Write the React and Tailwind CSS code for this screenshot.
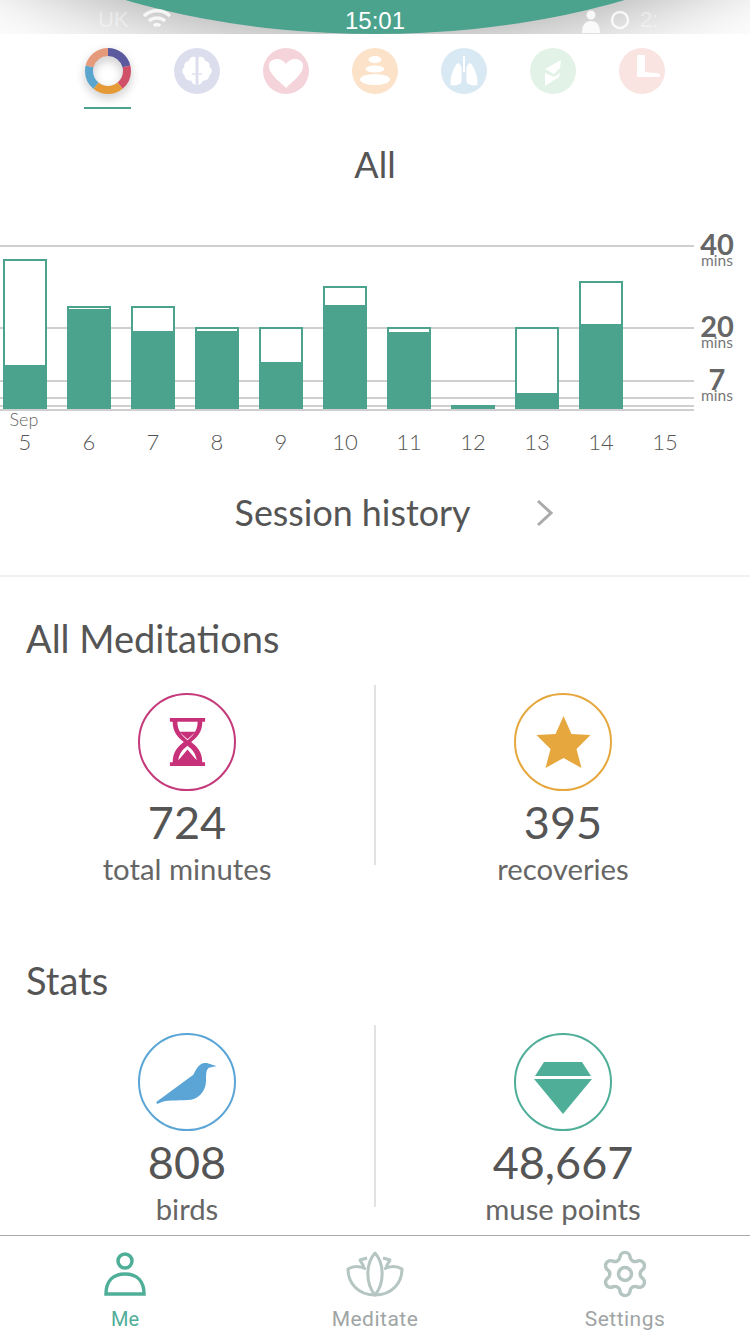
import { Settings } from 'lucide-react';

const bars = [
  { label: '5', total: 150, done: 44 },
  { label: '6', total: 103, done: 100 },
  { label: '7', total: 103, done: 78 },
  { label: '8', total: 82, done: 78 },
  { label: '9', total: 82, done: 47 },
  { label: '10', total: 123, done: 104 },
  { label: '11', total: 82, done: 77 },
  { label: '12', total: 3, done: 3 },
  { label: '13', total: 82, done: 16 },
  { label: '14', total: 128, done: 85 },
  { label: '15', total: 0, done: 0 },
];

function Bar({ total, done }) {
  return (
    <div className="w-11 flex flex-col justify-end shrink-0">
      {total > 0 && (
        <div className="relative border-2 border-[#4ba38e] bg-white w-11 box-border" style={{ height: total }}>
          <div className="absolute -left-[2px] -right-[2px] -bottom-[2px] bg-[#4ba38e]" style={{ height: done }} />
        </div>
      )}
    </div>
  );
}

function YLabel({ top, value }) {
  return (
    <div className={`absolute left-[696px] w-[42px] text-center text-[#666] ${top}`}>
      <div className="text-[29px] leading-[20px] font-bold">{value}</div>
      <div className="text-[15.5px] leading-[12px] text-[#777]">mins</div>
    </div>
  );
}

function Chart() {
  return (
    <div className="relative h-[210px] mt-[46px]">
      {/* grid lines */}
      <div className="absolute left-0 top-[13px] w-[694px] h-[2px] bg-[#cfcfcf]" />
      <div className="absolute left-0 top-[95px] w-[694px] h-[2px] bg-[#cfcfcf]" />
      <div className="absolute left-0 top-[148px] w-[694px] h-[2px] bg-[#cfcfcf]" />
      <div className="absolute left-0 top-[165px] w-[694px] h-[2px] bg-[#cfcfcf]" />
      <div className="absolute left-0 top-[173px] w-[694px] h-[2px] bg-[#cfcfcf]" />
      <div className="absolute left-0 top-[177px] w-[694px] h-[2px] bg-[#cfcfcf]" />
      <div className="absolute left-[3px] top-[26px] h-[151px] flex gap-5 items-end">
        {bars.map((b) => (
          <Bar key={b.label} total={b.total} done={b.done} />
        ))}
      </div>
      <YLabel top="top-[2px]" value="40" />
      <YLabel top="top-[84px]" value="20" />
      <YLabel top="top-[137px]" value="7" />
      <div className="absolute left-[-8px] top-[178px] w-[64px] text-center text-[18px] leading-[19px] font-light text-[#666]">Sep</div>
      <div className="absolute left-[-7px] top-[197px] flex">
        {bars.map((b) => (
          <div key={b.label} className="w-16 text-center text-[22px] leading-[26px] font-light text-[#555] shrink-0">
            {b.label}
          </div>
        ))}
      </div>
    </div>
  );
}

function Ring({ color, children }) {
  return (
    <div className="w-[98px] h-[98px] shrink-0 rounded-full border-2 flex items-center justify-center" style={{ borderColor: color }}>
      {children}
    </div>
  );
}

function Stat({ icon, value, label }) {
  return (
    <div className="flex-1 flex flex-col items-center pt-[8px]">
      {icon}
      <div className="text-[45px] leading-[52px] mt-[5px] text-[#555]">{value}</div>
      <div className="text-[29.3px] leading-[34px] mt-[4px] text-[#666]">{label}</div>
    </div>
  );
}

function TopIcon({ bg, children }) {
  return (
    <div className="w-[46px] h-[46px] rounded-full" style={{ backgroundColor: bg }}>
      <svg width="46" height="46" viewBox="0 0 46 46" fill="#fff">
        {children}
      </svg>
    </div>
  );
}

function Donut() {
  const segs = [
    ['#5b5a9f', 0, 21],
    ['#d0506a', 21, 18],
    ['#e49a37', 39, 22],
    ['#5aa5cd', 61, 18],
    ['#e59a7c', 79, 21],
  ];
  return (
    <svg width="46" height="46" viewBox="0 0 46 46" className="drop-shadow-[0_4px_5px_rgba(0,0,0,0.22)]">
      {segs.map(([c, start, len]) => (
        <circle
          key={c}
          cx="23"
          cy="23"
          r="19"
          fill="none"
          stroke={c}
          strokeWidth="8"
          pathLength="100"
          strokeDasharray={`${len} ${100 - len}`}
          strokeDashoffset={-start}
          transform="rotate(-90 23 23)"
        />
      ))}
    </svg>
  );
}

function TopIcons() {
  return (
    <div className="flex pl-[85px] gap-[43px] pt-[14px]">
      <div className="relative">
        <Donut />
        <div className="absolute left-[-1px] top-[59px] w-[47px] h-[2px] bg-[#4ba38e]" />
      </div>
      <TopIcon bg="#dcdeee">
        <path d="M21.500 9 C18 8 15 10 15 13 C12 13 9.500 16 10.500 19 C7.500 21 7.500 25 10.500 27 C11 31 14 33 17 32.500 C18.500 36 21.500 37 21.500 37 Z" />
        <path d="M24.500 9 C28 8 31 10 31 13 C34 13 36.500 16 35.500 19 C38.500 21 38.500 25 35.500 27 C35 31 32 33 29 32.500 C27.500 36 24.500 37 24.500 37 Z" />
        <path d="M21.500 26 H18 M24.500 26 H28" stroke="#dcdeee" strokeWidth="1.500" fill="none" />
      </TopIcon>
      <TopIcon bg="#f5d3da">
        <path d="M23 40 C15 32 6 26 6 18 C6 13 10 11 14 11 C18 11 21 13 23 16 C25 13 28 11 32 11 C36 11 40 13 40 18 C40 26 31 32 23 40 Z" />
      </TopIcon>
      <TopIcon bg="#fbe2c8">
        <ellipse cx="23" cy="11.500" rx="6.500" ry="3.500" />
        <ellipse cx="23" cy="21" rx="9.500" ry="3.500" />
        <ellipse cx="23" cy="31.500" rx="15" ry="5.500" />
      </TopIcon>
      <TopIcon bg="#d9e9f4">
        <path d="M22 8 h2 v16 h-2 z" />
        <path d="M20.500 20 C19 15 17 14 15 17 C11 23 9 31 9.500 37 C14 38 19 37 20.500 34 Z" />
        <path d="M25.500 20 C27 15 29 14 31 17 C35 23 37 31 36.500 37 C32 38 27 37 25.500 34 Z" />
      </TopIcon>
      <TopIcon bg="#e3f2e6">
        <path d="M31 12 L15 21 L24 26 L30 20 Z" />
        <path d="M15 25 L24 29 L30 25 L29 29 L15 38 Z" />
      </TopIcon>
      <TopIcon bg="#f9e4e1">
        <path d="M18 8 Q18 7 19 7 H25 Q26 7 26 8 V24 L40 25.500 Q41 26 41 27 V28 Q41 29 40 29 H19 Q18 29 18 28 Z" />
      </TopIcon>
    </div>
  );
}

function StatusBar() {
  return (
    <div className="relative h-[34px] overflow-hidden bg-white">
      <div className="absolute left-[-121px] top-[-466px] w-[992px] h-[500px] rounded-[50%] bg-[#4ba38e] shadow-[0_0_90px_rgba(0,0,0,0.42)]" />
      <div className="absolute left-[98px] top-[6px] text-white/40 text-[22px] leading-[28px] font-['Liberation_Sans',sans-serif]">UK</div>
      <svg width="30" height="24" viewBox="0 0 30 24" fill="none" stroke="#fff" strokeWidth="3.500" strokeOpacity="0.8" className="absolute left-[142px] top-[8px]">
        <path d="M2 8 C9 1 21 1 28 8" />
        <path d="M7 13 C11 9 19 9 23 13" />
        <path d="M12 18 C14 16 16 16 18 18" />
      </svg>
      <svg width="20" height="26" viewBox="0 0 20 26" fill="#fff" fillOpacity="0.85" className="absolute left-[581px] top-[9px]">
        <circle cx="10" cy="6" r="4.500" />
        <path d="M1 24 C1 15 5 12 10 12 C15 12 19 15 19 24 Z" />
      </svg>
      <svg width="20" height="24" viewBox="0 0 20 24" fill="none" stroke="#fff" strokeWidth="2.500" strokeOpacity="0.8" className="absolute left-[610px] top-[9px]">
        <circle cx="10" cy="11" r="8" />
      </svg>
      <div className="absolute left-[640px] top-[6px] text-white/40 text-[22px] leading-[28px] font-['Liberation_Sans',sans-serif]">2:</div>
      <div className="relative text-center text-white text-[24px] leading-[42px] font-['Liberation_Sans',sans-serif]">15:01</div>
    </div>
  );
}

export default function App() {
  return (
    <div className="relative w-[750px] h-[1334px] overflow-hidden bg-white font-['Lato',sans-serif]">
      <StatusBar />
      <TopIcons />
      <div className="text-center text-[36px] leading-[44px] mt-[48px] text-[#555]">All</div>
      <Chart />
      <div className="flex items-center justify-center h-[103px] mt-[32px] pb-[23px] pl-[39px] border-b-2 border-[#f0f0f0]">
        <span className="text-[35.8px] leading-[44px] text-[#555]">Session history</span>
        <svg width="18" height="28" viewBox="0 0 18 28" fill="none" stroke="#aaa" strokeWidth="3" className="ml-[66px]">
          <path d="M2 2 L15 14 L2 26" />
        </svg>
      </div>
      <div className="text-[38px] leading-[42px] pl-[26px] mt-[40px] text-[#555]">All Meditations</div>
      <div className="flex mt-[26px] h-[180px]">
        <Stat
          value="724"
          label="total minutes"
          icon={
            <Ring color="#c43a7b">
              <svg width="37" height="52" viewBox="0 0 40 52" fill="#c7317a">
                <path d="M1 0 H39 V4 H36 C36 16 30 21 24 26 C30 31 36 36 36 48 H39 V52 H1 V48 H4 C4 36 10 31 16 26 C10 21 4 16 4 4 H1 Z M9 4 C9 14 15 20 20 24 C25 20 31 14 31 4 Z M20 30 C15 34 11 38 10 46 L20 34 L30 46 C29 38 25 34 20 30 Z" fillRule="evenodd" />
                <path d="M11 15 H29 L20 23 Z" />
                <path d="M8 48 L20 36 L32 48 Z" />
              </svg>
            </Ring>
          }
        />
        <div className="w-[2px] bg-[#e2e2e2] h-[180px]" />
        <Stat
          value="395"
          label="recoveries"
          icon={
            <Ring color="#e6a83e">
              <svg width="55" height="52" viewBox="0 0 54 52" fill="#e6a83e">
                <path d="M27 0 L35 18 L54 19 L40 33 L45 52 L27 42 L9 52 L14 33 L0 19 L19 18 Z" />
              </svg>
            </Ring>
          }
        />
      </div>
      <div className="text-[38px] leading-[42px] pl-[26px] mt-[94px] text-[#555]">Stats</div>
      <div className="flex mt-[24px] h-[182px]">
        <Stat
          value="808"
          label="birds"
          icon={
            <Ring color="#5aa5d6">
              <svg width="61" height="43" viewBox="0 0 62 44" fill="#5aa5d6" className="-ml-[2px]">
                <path d="M0 42 L38 14 C41 8 44 2 50 2 C54 2 56 4 62 5 L54 7 C51 9 51 14 51 20 C51 32 42 40 32 40 C22 41 10 39 1 44 Z" />
              </svg>
            </Ring>
          }
        />
        <div className="w-[2px] bg-[#e2e2e2] h-[182px]" />
        <Stat
          value="48,667"
          label="muse points"
          icon={
            <Ring color="#4fae98">
              <svg width="58" height="52" viewBox="0 0 58 52" fill="#4fae98" className="mt-[11px]">
                <path d="M10 0 H48 L57 14 H1 Z" />
                <path d="M0 17 H58 L29 52 Z" />
              </svg>
            </Ring>
          }
        />
      </div>
      {/* bottom tab bar */}
      <div className="absolute left-0 bottom-0 w-full h-[99px] bg-white border-t border-[#aaa] flex">
        <div className="flex-1 flex flex-col items-center">
          <svg width="44" height="46" viewBox="0 0 44 46" fill="none" stroke="#4fae98" strokeWidth="3.500" className="mt-[15px]">
            <circle cx="22" cy="10" r="7" />
            <path d="M3 43 C3 30 10 23 22 23 C34 23 41 30 41 43 Z" />
          </svg>
          <div className="text-[20px] leading-[24px] mt-[10px] text-[#4fae98] font-['Roboto',sans-serif]">Me</div>
        </div>
        <div className="flex-1 flex flex-col items-center">
          <svg width="58" height="46" viewBox="0 0 58 46" fill="none" stroke="#b4c5c2" strokeWidth="3" strokeLinejoin="round" className="mt-[15px]">
            <path d="M29 2 C20 12 19 32 29 44 C39 32 38 12 29 2 Z" />
            <path d="M18 16 L14 9 L21 7 M40 16 L44 9 L37 7" />
            <path d="M20 18 C14 15 7 15 2 18 C2 32 12 44 29 44 C46 44 56 32 56 18 C51 15 44 15 38 18" />
          </svg>
          <div className="text-[21px] tracking-[0.5px] leading-[24px] mt-[10px] text-[#9fa5a5] font-['Roboto',sans-serif]">Meditate</div>
        </div>
        <div className="flex-1 flex flex-col items-center">
          <Settings size={52} color="#b4c5c2" strokeWidth={1.6} className="mt-[12px]" />
          <div className="text-[21px] tracking-[0.5px] leading-[24px] mt-[7px] text-[#9fa5a5] font-['Roboto',sans-serif]">Settings</div>
        </div>
      </div>
    </div>
  );
}
